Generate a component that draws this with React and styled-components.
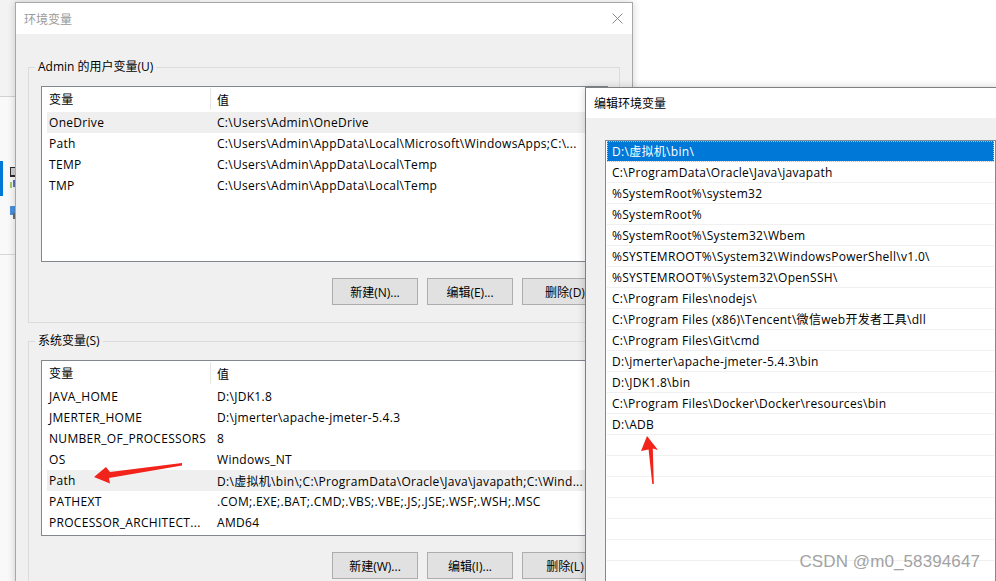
import React from "react";
import styled, { createGlobalStyle } from "styled-components";

const Global = createGlobalStyle`
  html, body { margin: 0; padding: 0; }
  body {
    width: 996px; height: 581px; overflow: hidden; background: #fff;
    font-family: "Open Sans", "Noto Sans CJK SC", sans-serif;
    font-size: 12px; color: #000;
  }
  * { box-sizing: border-box; }
`;

const Desktop = styled.div`
  position: relative; width: 996px; height: 581px; overflow: hidden; background: #fff;
`;

/* ---------- window behind (left strip) ---------- */
const BackWindow = styled.div`
  position: absolute; left: 0; top: 0; width: 200px; height: 581px;
  display: flex; flex-direction: column; background: #f9f9f9;
`;
const BackHeader = styled.div`
  height: 97px; background: #f3f3f3; border-bottom: 1px solid #d2d2d2;
`;
const BackList = styled.div`
  display: flex; flex-direction: column; padding-top: 64px; gap: 4px;
`;
const BackItem = styled.div`
  height: ${p => p.$h}px; display: flex; align-items: flex-start; padding-left: 7px; padding-top: 4px;
  border-left: 3px solid ${p => (p.$active ? "#0078d7" : "transparent")};
`;
const BackDivider = styled.div`
  margin-top: 34px; height: 1px; background: #d8d8d8;
`;

/* ---------- generic window ---------- */
const Win = styled.div`
  position: absolute; left: ${p => p.$x}px; top: ${p => p.$y}px;
  width: ${p => p.$w}px; height: ${p => p.$h}px;
  border: 1px solid ${p => p.$border};
  background: #f0f0f0; display: flex; flex-direction: column;
  box-shadow: 0 0 8px rgba(0, 0, 0, 0.18);
`;
const TitleBar = styled.div`
  height: ${p => p.$h}px; flex: none; background: #fff;
  display: flex; align-items: center; justify-content: space-between;
  padding-left: 8px;
`;
const Title = styled.span`
  color: ${p => (p.$inactive ? "#9a9a9a" : "#000")};
  font-family: "Noto Sans CJK SC", sans-serif; font-size: 12px; line-height: 16px;
`;
const CloseBtn = styled.div`
  width: 30px; height: 100%; display: flex; align-items: center; justify-content: center;
`;

/* ---------- main dialog ---------- */
const MainBody = styled.div`
  padding: 33px 12px 0; display: flex; flex-direction: column; gap: 18px;
`;
const Group = styled.section`
  position: relative; border: 1px solid #dcdcdc; padding: 18px 11px 17px 12px;
  display: flex; flex-direction: column; gap: 16px;
`;
const GroupLabel = styled.span`
  position: absolute; top: -10px; left: 6px; padding: 0 3px; background: #f0f0f0;
  font-family: "Open Sans", "Noto Sans CJK SC", sans-serif; line-height: 18px; color: #000;
`;
const ListView = styled.div`
  height: 176px; border: 1px solid #828790; background: #fff; overflow: hidden;
  display: flex; flex-direction: column;
`;
const LVRow = styled.div`
  height: ${p => (p.$header ? 25 : 21)}px; flex: none; margin-left: 5px;
  display: grid; grid-template-columns: 164px 1fr; align-items: stretch;
  background: ${p => (p.$hl ? "#efefef" : "transparent")};
`;
const LVCell = styled.div`
  display: flex; align-items: center; white-space: nowrap; overflow: hidden;
  padding-left: ${p => (p.$first ? 2 : 6)}px;
  border-right: ${p => (p.$div ? "1px solid #e5e5e5" : "none")};
  margin: ${p => (p.$div ? "1px 0 2px" : "0")};
  letter-spacing: 0.3px;
  font-family: "Open Sans", "Noto Sans CJK SC", sans-serif;
`;
const ButtonRow = styled.div`
  display: flex; justify-content: flex-end; gap: 9px;
`;
const Button = styled.div`
  width: 86px; height: 27px; background: #e1e1e1; border: 1px solid #adadad;
  display: flex; align-items: center; justify-content: center;
  font-family: "Open Sans", "Noto Sans CJK SC", sans-serif;
`;

/* ---------- edit dialog ---------- */
const EditBody = styled.div`
  padding: 22px 0 0 19px; flex: 1; display: flex; flex-direction: column;
`;
const ListBox = styled.div`
  width: 391px; flex: 1; border: 1px solid #828790; background: #fff; padding: 0 1px;
  display: flex; flex-direction: column; overflow: hidden;
`;
const LBRow = styled.div`
  height: 21px; flex: none; display: flex; align-items: center;
  padding-left: 5px; white-space: nowrap;
  border-bottom: 1px solid #f0f0f0;
  background: ${p => (p.$sel ? "#0078d7" : "transparent")};
  color: ${p => (p.$sel ? "#fff" : "#000")};
  outline: ${p => (p.$sel ? "1px dotted #f3b766" : "none")};
  outline-offset: -1px;
  letter-spacing: 0.3px;
  font-family: "Open Sans", "Noto Sans CJK SC", sans-serif;
`;

/* ---------- overlays ---------- */
const Overlay = styled.svg`
  position: absolute; left: 0; top: 0; pointer-events: none;
`;
const Watermark = styled.div`
  position: absolute; right: 16px; bottom: 9px;
  font-family: "Liberation Sans", Arial, sans-serif; font-size: 17px; color: #a2a2a2;
  letter-spacing: 0.1px;
`;

const userVars = [
  ["OneDrive", "C:\\Users\\Admin\\OneDrive", true],
  ["Path", "C:\\Users\\Admin\\AppData\\Local\\Microsoft\\WindowsApps;C:\\..."],
  ["TEMP", "C:\\Users\\Admin\\AppData\\Local\\Temp"],
  ["TMP", "C:\\Users\\Admin\\AppData\\Local\\Temp"],
];
const sysVars = [
  ["JAVA_HOME", "D:\\JDK1.8"],
  ["JMERTER_HOME", "D:\\jmerter\\apache-jmeter-5.4.3"],
  ["NUMBER_OF_PROCESSORS", "8"],
  ["OS", "Windows_NT"],
  ["Path", "D:\\虚拟机\\bin\\;C:\\ProgramData\\Oracle\\Java\\javapath;C:\\Wind...", true],
  ["PATHEXT", ".COM;.EXE;.BAT;.CMD;.VBS;.VBE;.JS;.JSE;.WSF;.WSH;.MSC"],
  ["PROCESSOR_ARCHITECT...", "AMD64"],
];
const pathItems = [
  "D:\\虚拟机\\bin\\",
  "C:\\ProgramData\\Oracle\\Java\\javapath",
  "%SystemRoot%\\system32",
  "%SystemRoot%",
  "%SystemRoot%\\System32\\Wbem",
  "%SYSTEMROOT%\\System32\\WindowsPowerShell\\v1.0\\",
  "%SYSTEMROOT%\\System32\\OpenSSH\\",
  "C:\\Program Files\\nodejs\\",
  "C:\\Program Files (x86)\\Tencent\\微信web开发者工具\\dll",
  "C:\\Program Files\\Git\\cmd",
  "D:\\jmerter\\apache-jmeter-5.4.3\\bin",
  "D:\\JDK1.8\\bin",
  "C:\\Program Files\\Docker\\Docker\\resources\\bin",
  "D:\\ADB",
];

function CloseIcon() {
  return (
    <svg width="11" height="11" viewBox="0 0 11 11">
      <path d="M0.5 0.5 L10.5 10.5 M10.5 0.5 L0.5 10.5" stroke="#8a8a8a" strokeWidth="1" fill="none" />
    </svg>
  );
}

function VarList({ rows }) {
  return (
    <ListView>
      <LVRow $header>
        <LVCell $first $div>变量</LVCell>
        <LVCell>值</LVCell>
      </LVRow>
      {rows.map(([k, v, hl]) => (
        <LVRow key={k} $hl={hl}>
          <LVCell $first>{k}</LVCell>
          <LVCell>{v}</LVCell>
        </LVRow>
      ))}
    </ListView>
  );
}

export default function App() {
  return (
    <Desktop>
      <Global />
      <BackWindow>
        <BackHeader />
        <BackList>
          <BackItem $active $h={35}>
            <svg width="8" height="24" viewBox="0 0 8 24">
              <rect x="0" y="2" width="8" height="10" fill="#2b2b2b" />
              <rect x="1" y="3" width="6" height="7" fill="#cfcfcf" />
              <rect x="0" y="17" width="2" height="6" fill="#9ccc65" />
              <rect x="3" y="15" width="5" height="7" fill="#5b6fb5" />
            </svg>
          </BackItem>
          <BackItem $h={20}>
            <svg width="8" height="16" viewBox="0 0 8 16">
              <rect x="0" y="2" width="8" height="9" fill="#4a90d9" />
              <rect x="3" y="9" width="5" height="6" fill="#6b6b6b" />
            </svg>
          </BackItem>
        </BackList>
        <BackDivider />
      </BackWindow>

      <Win $x={15} $y={2} $w={618} $h={620} $border="#a8a8a8">
        <TitleBar $h={31}>
          <Title $inactive>环境变量</Title>
          <CloseBtn><CloseIcon /></CloseBtn>
        </TitleBar>
        <MainBody>
          <Group>
            <GroupLabel>Admin 的用户变量(U)</GroupLabel>
            <VarList rows={userVars} />
            <ButtonRow>
              <Button>新建(N)...</Button>
              <Button>编辑(E)...</Button>
              <Button>删除(D)</Button>
            </ButtonRow>
          </Group>
          <Group>
            <GroupLabel>系统变量(S)</GroupLabel>
            <VarList rows={sysVars} />
            <ButtonRow>
              <Button>新建(W)...</Button>
              <Button>编辑(I)...</Button>
              <Button>删除(L)</Button>
            </ButtonRow>
          </Group>
        </MainBody>
      </Win>

      <Win $x={585} $y={87} $w={430} $h={510} $border="#7f7f7f">
        <TitleBar $h={30}>
          <Title>编辑环境变量</Title>
        </TitleBar>
        <EditBody>
          <ListBox>
            {pathItems.map((p, i) => (
              <LBRow key={p} $sel={i === 0}>{p}</LBRow>
            ))}
            {Array.from({ length: 8 }).map((_, i) => (
              <LBRow key={"e" + i} />
            ))}
          </ListBox>
        </EditBody>
      </Win>

      <Overlay width="996" height="581" viewBox="0 0 996 581">
        <polygon
          points="94,477 106,467 110,472 182,463 182,465.5 109,478 110,483.5"
          fill="#f2231b"
        />
        <polygon
          points="647,436 658,450 652.8,448.5 653.8,484 652.3,484 648.6,449.5 641,451"
          fill="#f2231b"
        />
      </Overlay>
      <Watermark>CSDN @m0_58394647</Watermark>
    </Desktop>
  );
}
